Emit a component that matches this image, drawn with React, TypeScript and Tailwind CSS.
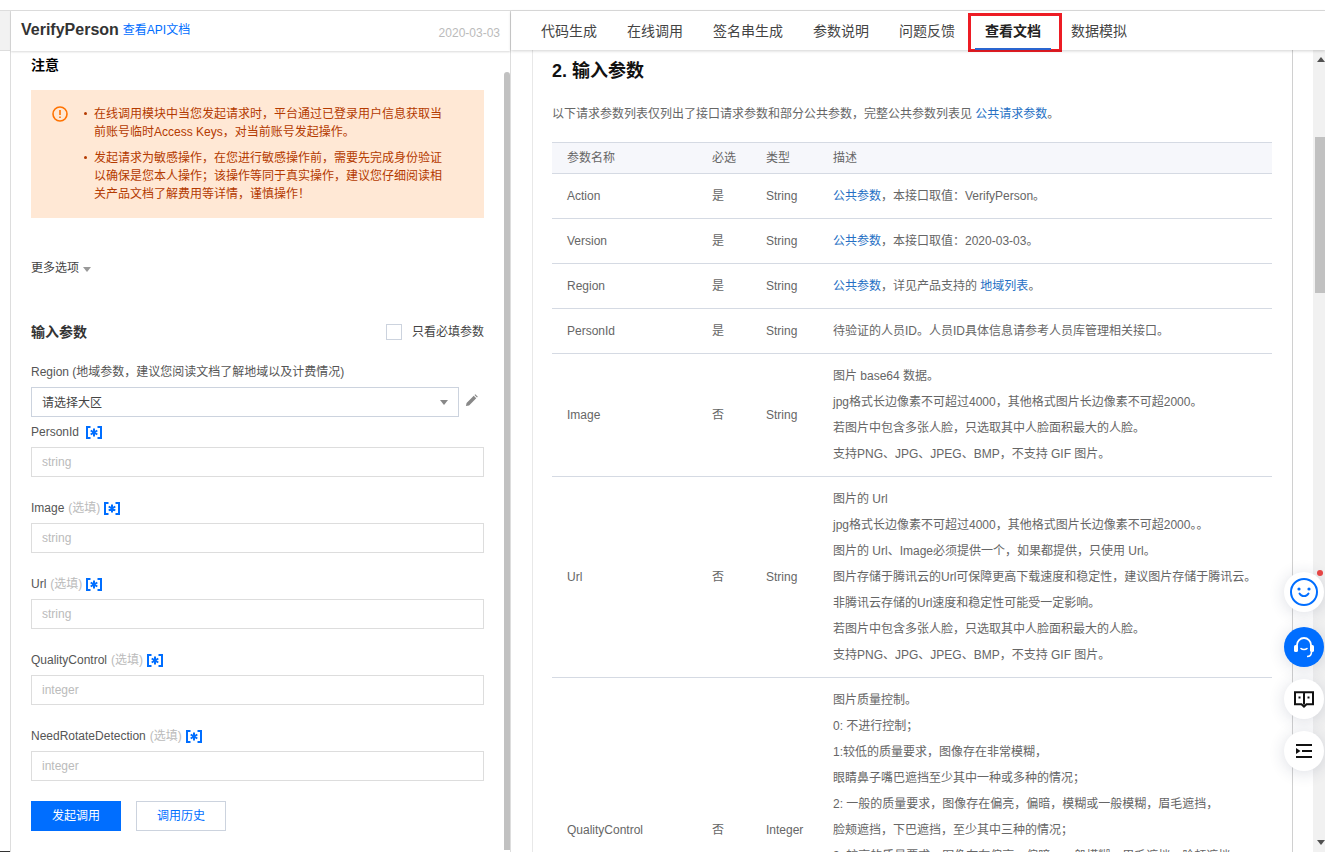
const font = "font-['Liberation_Sans','Noto_Sans_CJK_SC',sans-serif]"

function Star({ gap }: { gap: string }) {
  return (
    <svg viewBox="0 0 16 13" className={`${gap} h-[13px] w-[16px]`} fill="none" stroke="#006eff">
      <path d="M4.5 1H1v11h3.5M11.5 1H15v11h-3.5" strokeWidth="2" />
      <path d="M8 2.500v8M4.700 4.500l6.600 4M4.700 8.500l6.600-4" strokeWidth="2" />
    </svg>
  )
}

function Field({ name, optional, placeholder, top }: { name: string; optional?: boolean; placeholder: string; top: string }) {
  return (
    <div className={top}>
      <div className="flex h-[20px] items-center text-xs text-[#555]">
        {name}
        {optional && <span className="ml-1 text-[#bbb]">(选填)</span>}
        <Star gap={optional ? "ml-[4px]" : "ml-[7px]"} />
      </div>
      <div className="mt-[5px] flex h-[30px] items-center border border-[#dddddd] px-[10px] text-xs text-[#bbb]">{placeholder}</div>
    </div>
  )
}

function LeftPanel() {
  return (
    <div className="flex h-[841px] w-[500px] shrink-0 flex-col border-l border-[#dddddd] bg-white">
      <div className="z-10 flex h-[40px] shrink-0 items-start justify-between pl-[10px] pr-[10px] pt-[7px] shadow-[0_1px_2px_rgba(0,0,0,0.15)]">
        <div className="flex items-center">
          <span className="text-base font-bold text-[#333]">VerifyPerson</span>
          <span className="ml-[4px] text-xs text-[#006eff]">查看API文档</span>
        </div>
        <span className="mt-[7px] text-xs text-[#bbb]">2020-03-03</span>
      </div>
      <div className="flex min-h-0 flex-1">
        <div className="min-w-0 flex-1 px-[20px]">
          <div className="mt-[5px] h-[20px] text-sm font-bold leading-[18px] text-black">注意</div>
          <div className="mt-[14px] flex h-[128px] bg-[#ffe8d5] pl-[21px] pr-[38px] pt-[15px] text-xs leading-[18px] text-[#b43a00]">
            <svg viewBox="0 0 16 16" className="mt-[1px] h-[16px] w-[16px] shrink-0" fill="none">
              <circle cx="8" cy="8" r="7" stroke="#ff7200" strokeWidth="1.6" />
              <path d="M8 4v5M8 10.5v1.6" stroke="#ff7200" strokeWidth="1.6" />
            </svg>
            <ul className="ml-[16px]">
              <li className="relative pl-[10px] before:absolute before:left-0 before:top-[7px] before:h-[3px] before:w-[3px] before:rounded-full before:bg-[#b43a00]">
                在线调用模块中当您发起请求时，平台通过已登录用户信息获取当前账号临时Access Keys，对当前账号发起操作。
              </li>
              <li className="relative mt-[8px] pl-[10px] before:absolute before:left-0 before:top-[7px] before:h-[3px] before:w-[3px] before:rounded-full before:bg-[#b43a00]">
                发起请求为敏感操作，在您进行敏感操作前，需要先完成身份验证以确保是您本人操作；该操作等同于真实操作，建议您仔细阅读相关产品文档了解费用等详情，谨慎操作！
              </li>
            </ul>
          </div>
          <div className="mt-[41px] flex h-[18px] items-center text-xs text-[#444]">
            更多选项
            <span className="ml-[4px] mt-[2px] border-x-4 border-t-[5px] border-x-transparent border-t-[#999]" />
          </div>
          <div className="mt-[45px] flex h-[20px] items-center justify-between">
            <span className="text-sm font-bold text-[#333]">输入参数</span>
            <label className="flex items-center text-xs text-[#444]">
              <span className="mr-[10px] h-[16px] w-[16px] border border-[#ccd3de]" />
              只看必填参数
            </label>
          </div>
          <div className="mt-[20px] flex h-[20px] items-center text-xs text-[#555]">Region (地域参数，建议您阅读文档了解地域以及计费情况)</div>
          <div className="mt-[5px] flex items-center">
            <div className="flex h-[30px] w-[428px] items-center justify-between border border-[#ccd3de] pl-[10px] pr-[10px] pt-[1px] text-xs text-[#444]">
              请选择大区
              <span className="border-x-4 border-t-[5px] border-x-transparent border-t-[#888]" />
            </div>
            <svg viewBox="0 0 14 14" className="mb-[4px] ml-[6px] h-[13px] w-[13px]" fill="#888">
              <path d="M1 13l.7-3.4L9.4 1.9l2.7 2.7-7.7 7.7zM10.2 1.1l.9-.9 2.7 2.7-.9.9z" />
            </svg>
          </div>
          <Field name="PersonId" placeholder="string" top="mt-[5px]" />
          <Field name="Image" optional placeholder="string" top="mt-[21px]" />
          <Field name="Url" optional placeholder="string" top="mt-[21px]" />
          <Field name="QualityControl" optional placeholder="integer" top="mt-[21px]" />
          <Field name="NeedRotateDetection" optional placeholder="integer" top="mt-[21px]" />
          <div className="mt-[20px] flex gap-[15px]">
            <button className="h-[30px] w-[90px] bg-[#006eff] text-xs text-white">发起调用</button>
            <button className="h-[30px] w-[90px] border border-[#ccd3de] text-xs text-[#006eff]">调用历史</button>
          </div>
        </div>
        <div className="w-[6px] shrink-0 pt-[21px]">
          <div className="h-[778px] rounded-t-[3px] bg-[#c1c1c1]" />
        </div>
      </div>
    </div>
  )
}

const tabs = ["代码生成", "在线调用", "签名串生成", "参数说明", "问题反馈", "查看文档", "数据模拟"]

const link = "text-[#2670c4]"

type Row = { name: string; required: string; type: string; desc: React.ReactNode[] }

const rows: Row[] = [
  { name: "Action", required: "是", type: "String", desc: [<><span className={link}>公共参数</span>，本接口取值：VerifyPerson。</>] },
  { name: "Version", required: "是", type: "String", desc: [<><span className={link}>公共参数</span>，本接口取值：2020-03-03。</>] },
  { name: "Region", required: "是", type: "String", desc: [<><span className={link}>公共参数</span>，详见产品支持的 <span className={link}>地域列表</span>。</>] },
  { name: "PersonId", required: "是", type: "String", desc: ["待验证的人员ID。人员ID具体信息请参考人员库管理相关接口。"] },
  {
    name: "Image", required: "否", type: "String",
    desc: [
      "图片 base64 数据。",
      "jpg格式长边像素不可超过4000，其他格式图片长边像素不可超2000。",
      "若图片中包含多张人脸，只选取其中人脸面积最大的人脸。",
      "支持PNG、JPG、JPEG、BMP，不支持 GIF 图片。",
    ],
  },
  {
    name: "Url", required: "否", type: "String",
    desc: [
      "图片的 Url",
      "jpg格式长边像素不可超过4000，其他格式图片长边像素不可超2000。。",
      "图片的 Url、Image必须提供一个，如果都提供，只使用 Url。",
      "图片存储于腾讯云的Url可保障更高下载速度和稳定性，建议图片存储于腾讯云。",
      "非腾讯云存储的Url速度和稳定性可能受一定影响。",
      "若图片中包含多张人脸，只选取其中人脸面积最大的人脸。",
      "支持PNG、JPG、JPEG、BMP，不支持 GIF 图片。",
    ],
  },
  {
    name: "QualityControl", required: "否", type: "Integer",
    desc: [
      "图片质量控制。",
      "0: 不进行控制；",
      "1:较低的质量要求，图像存在非常模糊，",
      "眼睛鼻子嘴巴遮挡至少其中一种或多种的情况；",
      "2: 一般的质量要求，图像存在偏亮，偏暗，模糊或一般模糊，眉毛遮挡，",
      "脸颊遮挡，下巴遮挡，至少其中三种的情况；",
      "3: 较高的质量要求，图像存在偏亮，偏暗，一般模糊，眉毛遮挡，脸颊遮挡，",
    ],
  },
]

function DocTable() {
  return (
    <table className="mt-[19px] w-[720px] table-fixed border-collapse text-xs text-[#666]">
      <colgroup>
        <col className="w-[145px]" />
        <col className="w-[54px]" />
        <col className="w-[67px]" />
        <col />
      </colgroup>
      <thead>
        <tr className="h-[31px] border-y border-[#d5dae3] bg-[#f6f7fb] text-left">
          <th className="pl-[15px] font-normal">参数名称</th>
          <th className="pl-[15px] font-normal">必选</th>
          <th className="pl-[15px] font-normal">类型</th>
          <th className="pl-[15px] font-normal">描述</th>
        </tr>
      </thead>
      <tbody>
        {rows.map((row) => (
          <tr key={row.name} className={row.name === "QualityControl" ? "h-[305px] border-b border-[#d5dae3]" : "border-b border-[#d5dae3]"}>
            <td className="pl-[15px]">{row.name}</td>
            <td className="pl-[15px]">{row.required}</td>
            <td className="pl-[15px]">{row.type}</td>
            <td className="pb-[9px] pl-[15px] pt-[9px] align-top leading-[26px]">
              {row.desc.map((line, i) => (
                <div key={i} className="whitespace-nowrap">{line}</div>
              ))}
            </td>
          </tr>
        ))}
      </tbody>
    </table>
  )
}

function RightPanel() {
  return (
    <div className="flex h-[841px] min-w-0 flex-1 flex-col border-l border-[#dddddd] bg-white">
      <div className="z-10 flex h-[39px] shrink-0 items-stretch gap-[10px] pl-[20px] shadow-[0_1px_3px_rgba(0,0,0,0.18)]">
        {tabs.map((tab) => (
          <div
            key={tab}
            className={
              tab === "查看文档"
                ? "flex items-center border-b-2 border-[#2a65d0] px-[10px] pt-[2px] text-sm font-bold text-[#222]"
                : "flex items-center px-[10px] text-sm text-[#444]"
            }
          >
            {tab}
          </div>
        ))}
      </div>
      <div className="flex min-h-0 flex-1 overflow-hidden">
        <div className="ml-[21px] w-[761px] shrink-0 overflow-hidden border-l border-r border-l-[#e8e8e8] border-r-[#d0d0d0] px-[19px]">
          <h2 className="mt-[9px] text-lg font-bold leading-[24px] text-[#111]">2. 输入参数</h2>
          <p className="mt-[22px] text-xs leading-[18px] text-[#666]">
            以下请求参数列表仅列出了接口请求参数和部分公共参数，完整公共参数列表见 <span className={link}>公共请求参数</span>。
          </p>
          <DocTable />
        </div>
        <div className="ml-[20px] flex w-[12px] flex-col items-end bg-[#f1f1f1]">
          <div className="mt-[7px] border-x-4 border-b-[5px] border-x-transparent border-b-[#505050]" />
          <div className="mt-[75px] h-[156px] w-[10px] bg-[#c1c1c1]" />
          <div className="mb-[7px] mt-auto border-x-4 border-t-[5px] border-x-transparent border-t-[#505050]" />
        </div>
      </div>
    </div>
  )
}

function FloatButton({ blue, dot, children }: { blue?: boolean; dot?: boolean; children: React.ReactNode }) {
  return (
    <div className={`relative flex h-[40px] w-[40px] items-center justify-center rounded-full shadow-[0_2px_16px_rgba(40,50,90,0.16)] ${blue ? "bg-[#006eff]" : "bg-white"}`}>
      {children}
      {dot && <span className="absolute right-[1px] top-[-2px] h-[6px] w-[6px] rounded-full bg-[#e54545]" />}
    </div>
  )
}

export default function App() {
  return (
    <div className={`${font} relative h-[852px] w-[1325px] overflow-hidden bg-white`}>
      <div className="h-[10px] bg-white" />
      <div className="flex h-[841px] border-t border-[#dddddd]">
        <div className="h-[40px] w-[10px] shrink-0 border-b border-[#dddddd] bg-[#f2f2f2]" />
        <LeftPanel />
        <RightPanel />
      </div>
      <div className="h-[1px] bg-[#333]" />

      <div className="absolute left-[968px] top-[13px] h-[39px] w-[94px] border-[3px] border-[#ed1c24]" />

      <div className="absolute left-[1284px] top-[572px] flex flex-col gap-[12px]">
        <div className="mb-[3px]">
          <FloatButton dot>
            <svg viewBox="0 0 28 28" className="h-[28px] w-[28px]" fill="none">
              <circle cx="14" cy="14" r="13" stroke="#006eff" strokeWidth="2" />
              <circle cx="9" cy="11" r="1.6" fill="#006eff" />
              <circle cx="19" cy="11" r="1.6" fill="#006eff" />
              <path d="M9.5 15.5c1 1.8 2.6 2.6 4.5 2.6s3.500-.8 4.500-2.600" stroke="#006eff" strokeWidth="1.9" strokeLinecap="round" />
            </svg>
          </FloatButton>
        </div>
        <FloatButton blue>
          <svg viewBox="0 0 22 22" className="h-[22px] w-[22px]" fill="none">
            <path d="M4 11V9a7 7 0 0114 0v2" stroke="#fff" strokeWidth="1.8" />
            <rect x="1" y="9" width="4" height="7" rx="1.6" fill="#fff" />
            <rect x="17" y="9" width="4" height="7" rx="1.6" fill="#fff" />
            <path d="M8 12.5c1.4 1.4 4.6 1.4 6 0" stroke="#fff" strokeWidth="1.6" strokeLinecap="round" />
            <path d="M18.5 16c0 3-1 4.5-4.5 4.5" stroke="#fff" strokeWidth="1.6" />
          </svg>
        </FloatButton>
        <FloatButton>
          <svg viewBox="0 0 20 17" className="h-[17px] w-[20px]" fill="none" stroke="#111" strokeWidth="2">
            <path d="M10 2v11.5M1 1.2h8.2l.8.8.8-.8H19v12h-6.5L10 15.6l-2.500-2.400H1z" />
            <path d="M4.500 6.500h2M13.500 6.500h2" strokeWidth="2" />
          </svg>
        </FloatButton>
        <FloatButton>
          <svg viewBox="0 0 16 16" className="h-[16px] w-[16px]" fill="#111">
            <rect x="0" y="1" width="16" height="2" />
            <rect x="6" y="7" width="10" height="2" />
            <rect x="0" y="13" width="16" height="2" />
            <path d="M0 5l4.500 3L0 11z" />
          </svg>
        </FloatButton>
      </div>
    </div>
  )
}
